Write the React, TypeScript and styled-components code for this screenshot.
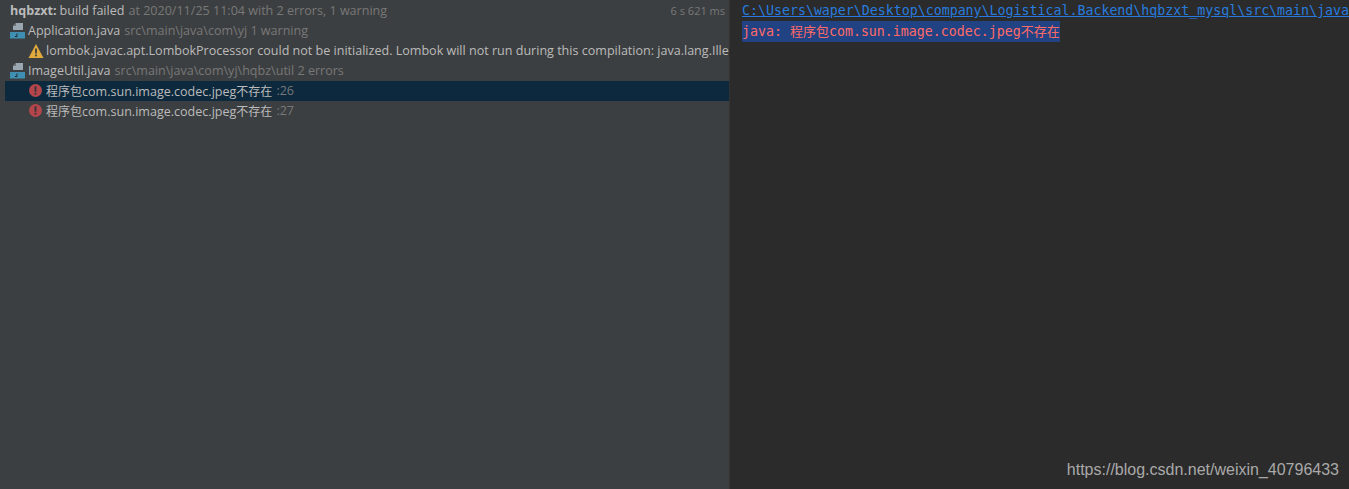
import React from "react";
import styled, { createGlobalStyle } from "styled-components";

const GlobalStyle = createGlobalStyle`
  html, body {
    margin: 0;
    padding: 0;
    height: 100%;
    background: #2b2b2b;
    overflow: hidden;
  }
`;

const Page = styled.div`
  display: flex;
  width: 1349px;
  height: 489px;
  overflow: hidden;
`;

const TreePane = styled.div`
  width: 730px;
  flex: none;
  box-sizing: border-box;
  background: #3c3f41;
  padding: 1px 0 0 4px;
  border-left: 1px solid #3c3f41;
  border-right: 1px solid #323232;
  overflow: hidden;
  font-family: "Open Sans", "Noto Sans CJK SC", sans-serif;
  font-size: 12.55px;
  color: #bbbbbb;
`;

const Row = styled.div<{ $indent: number; $selected?: boolean }>`
  display: flex;
  align-items: center;
  height: 20px;
  box-sizing: border-box;
  padding-left: ${(p) => p.$indent}px;
  padding-bottom: 1px;
  white-space: nowrap;
  overflow: hidden;
  background: ${(p) => (p.$selected ? "#0d293e" : "transparent")};
`;

const IconSlot = styled.svg`
  flex: none;
  width: 16px;
  height: 16px;
  margin-top: 1px;
  margin-right: 2px;
`;

const Strong = styled.span`
  font-weight: 700;
  margin-right: 3px;
`;

const Gray = styled.span`
  color: #787878;
  margin-left: 4px;
`;

const Duration = styled.span`
  margin-left: auto;
  padding-right: 4px;
  color: #787878;
  font-size: 11px;
`;

const TreeCjk = styled.span`
  font-size: 12px;
`;

const OutputPane = styled.div`
  flex: 1;
  min-width: 0;
  position: relative;
  background: #2b2b2b;
  padding: 2px 0 0 12px;
  font-family: "DejaVu Sans Mono", "Noto Sans CJK SC", monospace;
  font-size: 13.28px;
  overflow: hidden;
`;

const PathLink = styled.div`
  height: 19px;
  line-height: 18px;
  color: #287bde;
  text-decoration: underline;
  white-space: nowrap;
`;

const ErrorLine = styled.div`
  display: inline-block;
  height: 21px;
  line-height: 21px;
  color: #ff6b68;
  background: #214283;
  white-space: nowrap;
`;

const Cjk = styled.span`
  font-size: 13px;
`;

const Watermark = styled.div`
  position: absolute;
  right: 10px;
  bottom: 10px;
  font-family: "Liberation Sans", sans-serif;
  font-size: 16px;
  color: #a9a9a9;
`;

function FileIcon() {
  return (
    <IconSlot viewBox="0 0 16 16">
      <path d="M6 0h7v7H3V3z" fill="#9aa7b0" />
      <path d="M3 3h3V0z" fill="#6e7478" />
      <rect x="0" y="9" width="15" height="6.500" fill="#3f8fb3" />
      <rect x="0" y="8" width="15" height="1" fill="#3c3f41" />
      <path d="M7 10.500v3H5" stroke="#1f2a30" strokeWidth="1" fill="none" />
    </IconSlot>
  );
}

function WarningIcon() {
  return (
    <IconSlot viewBox="0 0 16 16">
      <path d="M8 1L15.500 15H0.500z" fill="#e0a93b" />
      <rect x="7.100" y="5.500" width="1.800" height="5" fill="#3c3f41" />
      <rect x="7.100" y="11.500" width="1.800" height="1.800" fill="#3c3f41" />
    </IconSlot>
  );
}

function ErrorIcon() {
  return (
    <IconSlot viewBox="0 0 16 16">
      <circle cx="7.500" cy="7.500" r="6.500" fill="#b4454b" />
      <rect x="6.600" y="3.300" width="1.800" height="5.400" fill="#31353a" />
      <rect x="6.600" y="9.800" width="1.800" height="1.800" fill="#31353a" />
    </IconSlot>
  );
}

export default function App() {
  return (
    <Page>
      <GlobalStyle />
      <TreePane>
        <Row $indent={5}>
          <Strong>hqbzxt:</Strong>build failed
          <Gray>at 2020/11/25 11:04 with 2 errors, 1 warning</Gray>
          <Duration>6 s 621 ms</Duration>
        </Row>
        <Row $indent={5}>
          <FileIcon />
          Application.java<Gray>src\main\java\com\yj 1 warning</Gray>
        </Row>
        <Row $indent={23}>
          <WarningIcon />
          lombok.javac.apt.LombokProcessor could not be initialized. Lombok will not run during this compilation: java.lang.Ille
        </Row>
        <Row $indent={5}>
          <FileIcon />
          ImageUtil.java<Gray>src\main\java\com\yj\hqbz\util 2 errors</Gray>
        </Row>
        <Row $indent={23} $selected>
          <ErrorIcon />
          <span><TreeCjk>程序包</TreeCjk>com.sun.image.codec.jpeg<TreeCjk>不存在</TreeCjk></span><Gray>:26</Gray>
        </Row>
        <Row $indent={23}>
          <ErrorIcon />
          <span><TreeCjk>程序包</TreeCjk>com.sun.image.codec.jpeg<TreeCjk>不存在</TreeCjk></span><Gray>:27</Gray>
        </Row>
      </TreePane>
      <OutputPane>
        <PathLink>C:\Users\waper\Desktop\company\Logistical.Backend\hqbzxt_mysql\src\main\java</PathLink>
        <ErrorLine>java: <Cjk>程序包</Cjk>com.sun.image.codec.jpeg<Cjk>不存在</Cjk></ErrorLine>
        <Watermark>https://blog.csdn.net/weixin_40796433</Watermark>
      </OutputPane>
    </Page>
  );
}
